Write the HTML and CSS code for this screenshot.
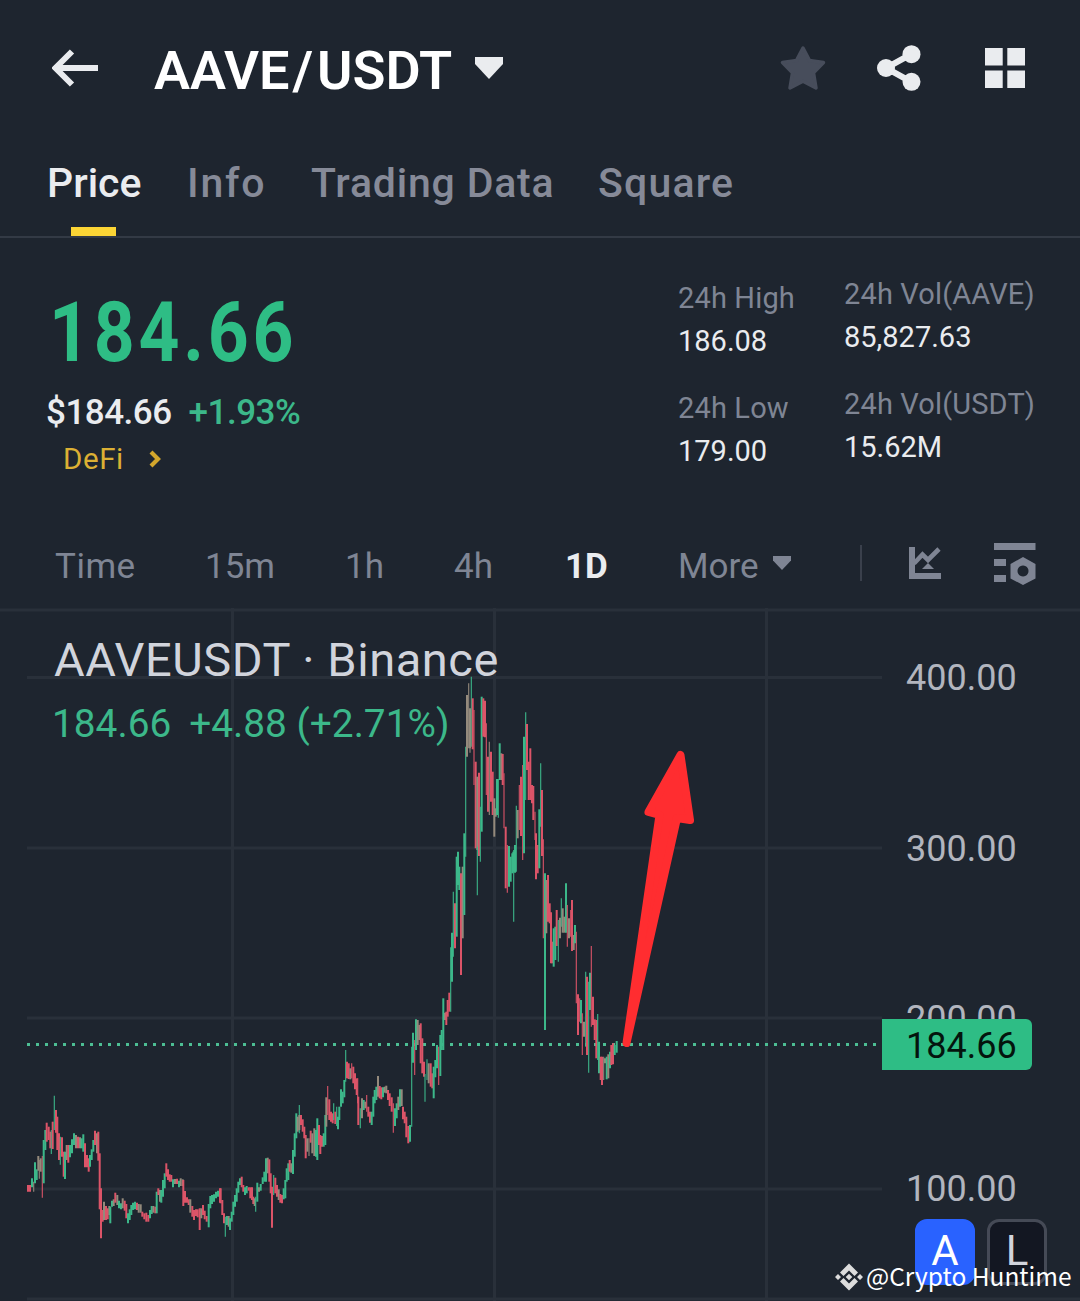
FILE: index.html
```html
<!DOCTYPE html>
<html lang="en">
<head>
  <meta charset="utf-8">
  <title>AAVE/USDT</title>
  <link rel="stylesheet" href="styles.css">
</head>
<body>
  <header class="topbar">
    <svg class="back" width="46" height="38" viewBox="0 0 46 38">
      <path d="M4 19H46M20 2.5L3.5 19L20 35.5" fill="none" stroke="#eaecef" stroke-width="6"/>
    </svg>
    <h1>AAVE<span class="slash">/</span>USDT</h1>
    <svg class="caret" width="28" height="22" viewBox="0 0 28 22">
      <path d="M0 0H28V7L14 22L0 7Z" fill="#eaecef"/>
    </svg>
    <div class="actions">
      <svg width="46" height="46" viewBox="0 0 46 46">
        <path d="M23 3L29.4 15.4L43.5 17.5L33.5 27.8L36 43L23 36.3L10 43L12.5 27.8L2.5 17.5L16.6 15.4Z" fill="#474d5b" stroke="#474d5b" stroke-width="3.5" stroke-linejoin="round"/>
      </svg>
      <svg width="44" height="46" viewBox="0 0 44 46">
        <path d="M34.5 9L9 23L34.5 37" fill="none" stroke="#eaecef" stroke-width="6"/>
        <g fill="#eaecef">
          <circle cx="34.500" cy="9.200" r="9"/>
          <circle cx="9" cy="23" r="9"/>
          <circle cx="34.500" cy="36.800" r="9"/>
        </g>
      </svg>
      <svg width="40" height="40" viewBox="0 0 40 40">
        <path d="M0 0H17.700V17.500H0ZM22.300 0H40V17.500H22.300ZM0 22.500H17.700V40H0ZM22.300 22.500H40V40H22.300Z" fill="#eaecef"/>
      </svg>
    </div>
  </header>

  <nav class="tabs">
    <a class="tab tab-price active">Price</a>
    <a class="tab tab-info">Info</a>
    <a class="tab tab-data">Trading Data</a>
    <a class="tab tab-square">Square</a>
  </nav>

  <section class="quote">
    <div class="quote-main">
      <div class="last-price">184.66</div>
      <div class="sub-price">
        <span class="fiat">$184.66</span>
        <span class="change">+1.93%</span>
      </div>
      <div class="category">
        <span>DeFi</span>
        <svg width="12" height="18" viewBox="0 0 12 18">
          <path d="M2 2L9 9L2 16" fill="none" stroke="#d3a62c" stroke-width="4.200"/>
        </svg>
      </div>
    </div>
    <div class="stats">
      <dl class="stats-range">
        <dt>24h High</dt>
        <dd>186.08</dd>
        <dt>24h Low</dt>
        <dd>179.00</dd>
      </dl>
      <dl class="stats-volume">
        <dt>24h Vol(AAVE)</dt>
        <dd>85,827.63</dd>
        <dt>24h Vol(USDT)</dt>
        <dd>15.62M</dd>
      </dl>
    </div>
  </section>

  <div class="intervals">
    <span class="iv iv-time">Time</span>
    <span class="iv iv-15m">15m</span>
    <span class="iv iv-1h">1h</span>
    <span class="iv iv-4h">4h</span>
    <span class="iv iv-1d active">1D</span>
    <span class="iv iv-more">More
      <svg width="18" height="14" viewBox="0 0 18 14"><path d="M0 0H18V4.500L9 14L0 4.500Z" fill="#7f8594"/></svg>
    </span>
    <i class="split"></i>
    <svg class="icon-chart" width="32" height="32" viewBox="0 0 32 32">
      <path d="M0 0H6V26H32V32H0Z" fill="#7f8594"/>
      <path d="M5 16.500L13.500 7.500L19 13L30 2" fill="none" stroke="#7f8594" stroke-width="4.600"/>
      <path d="M13 22L19 16L25 22Z" fill="#7f8594"/>
    </svg>
    <svg class="icon-settings" width="42" height="42" viewBox="0 0 42 42">
      <path d="M0 0H41.500V7H0ZM0 16H12V23H0ZM0 32H12V39H0Z" fill="#7f8594"/>
      <path fill-rule="evenodd" d="M29 14L41.500 21V35.500L29 42L16.500 35.500V21ZM29 22.500a5.500 5.500 0 1 0 .01 0Z" fill="#7f8594"/>
    </svg>
  </div>

  <main class="chart">
    <svg class="plot" width="1080" height="693" viewBox="0 608 1080 693">
      <g class="grid">
        <path d="M0 610H1080M27 677.500H882M27 848H882M27 1018H882M27 1189H882M27 1299H1080"/>
        <path d="M232.500 608V1301M494.500 608V1301M766.500 608V1301"/>
      </g>
      <path class="price-line" d="M27 1044.500H880"/>
      <g id="candles"></g>
      <!-- hand drawn arrow -->
      <path class="arrow" d="M626.500 1043L659.500 815L648.500 812L680.500 755L690 820L677 818Z"/>
      <g class="axis">
        <text x="906" y="690">400.00</text>
        <text x="906" y="861">300.00</text>
        <text x="906" y="1031">200.00</text>
        <text x="906" y="1201">100.00</text>
      </g>
      <path d="M882 1019H1026a6 6 0 0 1 6 6V1064a6 6 0 0 1 -6 6H882Z" fill="#2ebd85"/>
      <text class="tag" x="906" y="1058">184.66</text>
    </svg>
    <div class="legend">
      <div class="symbol">AAVEUSDT · Binance</div>
      <div class="values"><span>184.66</span><span>+4.88 (+2.71%)</span></div>
    </div>
    <div class="scale-buttons">
      <span class="scale-btn auto">A</span>
      <span class="scale-btn">L</span>
    </div>
    <div class="credit">
      <svg width="28" height="28" viewBox="0 0 28 28" fill="#dcdcdc">
        <path d="M5 9.500L14 0.500L23 9.500L19.500 13L14 7.500L8.500 13ZM5 18.500L14 27.500L23 18.500L19.500 15L14 20.500L8.500 15Z"/>
        <path d="M14 10.700L17.300 14L14 17.300L10.700 14ZM3 11L6 14L3 17L0 14ZM25 11L28 14L25 17L22 14Z"/>
      </svg>
      <span>@Crypto Huntime</span>
    </div>
  </main>

  <script src="chart.js"></script>
</body>
</html>
```
FILE: styles.css
```css
* {
  box-sizing: border-box;
}

body {
  width: 1080px;
  height: 1301px;
  margin: 0;
  overflow: hidden;
  background: #1e252f;
  color: #eaecef;
  font-family: Roboto, "Liberation Sans", sans-serif;
}

svg {
  display: block;
  flex: none;
}

/* Header */
.topbar {
  display: flex;
  align-items: center;
  height: 136px;
  padding: 0 55px 0 52px;
}

h1 {
  width: 320px;
  margin: 5px 0 0 56px;
  color: #fff;
  font-size: 54px;
  font-weight: 600;
  line-height: 64px;
  white-space: nowrap;
}

.slash {
  margin: 0 4px 0 3px;
}

.caret {
  margin-left: 1px;
}

.actions {
  display: flex;
  align-items: center;
  margin-left: auto;
}

.actions svg + svg {
  margin-left: 51px;
}

.actions svg:last-child {
  margin-left: 64px;
}

.tabs {
  display: flex;
  height: 102px;
  padding-left: 47px;
  border-bottom: 2px solid #333a45;
}

.tab {
  position: relative;
  height: 100px;
  padding-top: 22px;
  color: #868a98;
  font-size: 41px;
  font-weight: 500;
  line-height: 50px;
  white-space: nowrap;
}

.tab-price {
  width: 140px;
}

.tab-info {
  width: 124px;
  letter-spacing: 1.8px;
}

.tab-data {
  width: 287px;
  letter-spacing: 0.8px;
}

.tab-square {
  letter-spacing: 1.2px;
}

.tab.active {
  color: #eaecef;
}

.tab.active::after {
  content: "";
  position: absolute;
  left: 24px;
  bottom: 0;
  width: 45px;
  height: 9px;
  background: #fcd535;
}

/* Price summary */
.quote {
  display: flex;
  justify-content: space-between;
  height: 286px;
  padding-left: 46px;
}

.quote-main {
  padding-top: 53px;
}

.last-price {
  margin-left: 3px;
  color: #2ebd85;
  font-size: 83px;
  font-weight: 700;
  letter-spacing: 4.4px;
  line-height: 84px;
  transform: scaleX(0.86);
  transform-origin: left;
}

.sub-price {
  display: flex;
  gap: 17px;
  margin-top: 16px;
  font-size: 35px;
  font-weight: 500;
  letter-spacing: -0.5px;
  line-height: 44px;
}

.change {
  color: #3cb88a;
}

.category {
  display: flex;
  align-items: center;
  gap: 25px;
  margin-top: 4px;
  padding-left: 17px;
  color: #dcb034;
  font-size: 29.5px;
  letter-spacing: 0.6px;
  line-height: 40px;
}

.stats {
  display: flex;
  width: 403px;
  padding-left: 1px;
}

.stats dl {
  margin: 0;
  font-size: 29px;
  line-height: 43px;
  white-space: nowrap;
}

.stats-range {
  width: 166px;
  padding-top: 39px;
}

.stats-volume {
  padding-top: 35px;
}

.stats dt {
  color: #7f8594;
  letter-spacing: 0.15px;
}

.stats dd {
  margin: 0 0 24px;
}

/* Interval picker */
.intervals {
  display: flex;
  align-items: center;
  height: 84px;
  padding-left: 55px;
  color: #7f8594;
  font-size: 35px;
  line-height: 44px;
}

.iv {
  padding-top: 1px;
}

.iv-time {
  width: 150px;
  letter-spacing: 0.5px;
}

.iv-15m { width: 140px; }
.iv-1h { width: 109px; }
.iv-4h { width: 111px; }
.iv-1d { width: 112px; }

.iv.active {
  color: #eaecef;
  font-weight: 700;
}

.iv-more {
  display: flex;
  align-items: center;
  gap: 14px;
  width: 183px;
  padding-left: 1px;
}

.iv-more svg {
  margin-top: -7px;
}

.split {
  width: 2px;
  height: 36px;
  margin-top: -6px;
  background: #3a404c;
}

.icon-chart {
  margin: -6px 53px 0 47px;
}

.icon-settings {
  margin-top: -4px;
}

/* Chart */
.chart {
  position: relative;
  height: 693px;
}

.plot {
  position: absolute;
  top: 0;
  left: 0;
}

.grid path {
  fill: none;
  stroke: #29303a;
  stroke-width: 3;
}

.price-line {
  fill: none;
  stroke: #4dbf94;
  stroke-width: 3;
  stroke-dasharray: 3 6;
}

.candle {
  fill: none;
}

.up { stroke: #3cb88a; }
.down { stroke: #dc5468; }
.mixed { stroke: #948a7c; }

.arrow {
  fill: #ff2d30;
  stroke: #ff2d30;
  stroke-width: 8;
  stroke-linejoin: round;
}

.axis {
  fill: #b2b5be;
  font-size: 36px;
}

.tag {
  fill: #04140d;
  font-size: 36px;
}

.legend {
  position: relative;
  padding: 22px 0 0 54px;
}

.symbol {
  color: #d1d4dc;
  font-size: 47px;
  letter-spacing: 0.55px;
  line-height: 60px;
}

.values {
  display: flex;
  gap: 18px;
  margin: 9px 0 0 -2px;
  color: #3cb88a;
  font-size: 38.8px;
  line-height: 50px;
}

.scale-buttons {
  position: absolute;
  top: 611px;
  left: 915px;
  display: flex;
  gap: 12px;
}

.scale-btn {
  width: 60px;
  height: 66px;
  border: 3px solid #454a56;
  border-radius: 12px;
  background: #131722;
  color: #d1d4dc;
  font-size: 42px;
  line-height: 57px;
  text-align: center;
}

.scale-btn.auto {
  border-color: #2962ff;
  background: #2962ff;
  color: #fff;
}

.credit {
  position: absolute;
  top: 649px;
  left: 835px;
  display: flex;
  align-items: center;
  gap: 3px;
  height: 40px;
  color: #fff;
  font-family: "Noto Sans CJK SC", sans-serif;
  font-size: 24.5px;
  font-weight: 400;
  line-height: 38px;
  white-space: nowrap;
}

.credit span {
  margin-top: -2px;
}
```
FILE: chart.js
```js
// Each run of bars has its own origin, values are in thirds of a pixel.
// g = up, r = down, m = overlapping bars, lower case t after the kind = thin wick
const runs = [
  {
    x: 0, y: 1080,
    bars: `r84,315,335 r90,315,335 g96,295,322 mt101,305,335 g105,247,310 g110,268,300 m115,228,272 mt118,240,296 m122,235,275
      rt127,228,353 g131,180,310 g136,150,210 r140,128,185 r146,140,180 r151,155,205 gt154,150,222 r158,125,207 gt163,47,150
      r168,90,158 r172,110,210 r177,160,240 gt181,170,254 r186,172,230 r191,215,290 g195,215,297 m200,195,240 r205,195,248
      g210,195,232 g216,178,220 g222,160,195 m228,165,205 r234,170,205 m240,172,205 g245,175,205 g250,163,215 r255,190,262
      r261,225,262 r266,235,275 g270,225,260 g275,208,240 g280,180,215 r285,152,195 m291,160,220 r295,155,242 r299,220,388
      r303,325,475 r308,390,425 m312,365,420 r318,378,420 r323,385,418 m328,378,405 g331,380,430 g336,362,380 m341,358,378
      r346,338,368 m352,345,375 g357,362,385 g363,370,388 m368,355,385 r374,362,392 r379,372,415 g384,400,430 g389,388,420
      g394,375,405 g399,368,390 g405,365,388 r411,368,390 m416,372,398 m422,373,398 r427,395,410 r433,400,418 r439,398,425
      r445,405,425 g450,390,415 g455,378,402 m460,378,398 r466,380,400 g470,335,400 r475,325,345 m480,330,365 g484,330,368
      g489,300,350 g494,280,325 r499,250,290 r504,268,300 r509,283,305 r514,285,305 g519,298,322 m525,297,312 r531,296,312
      g537,302,322 m542,295,318 m548,298,318 r550,300,378 r555,333,368 r561,352,368 r566,358,375 m571,358,398 r577,378,410
      r582,390,420 r588,388,408 r593,388,412 r599,385,450 m604,385,415 r609,375,405 r614,392,418 r620,408,425 g626,372,442
      g631,348,385 g636,345,372 g642,343,365 g648,335,355 g654,332,350 r660,325,368`
  },
  {
    x: 220, y: 1000,
    bars: `r2,565,610 r7,600,645 r12,640,670 gt16,650,710 g21,648,675 m26,648,680 g30,655,690 g35,635,665 g40,605,645
      g45,585,620 g50,565,605 g55,545,578 g60,535,555 r65,530,562 r70,555,575 g75,562,585 g80,558,580 r86,562,572
      r91,562,595 r96,562,600 r100,590,612 m104,595,618 gt107,590,635 g112,548,605 m117,562,575 g122,552,572 g128,532,552
      g133,515,545 g138,475,545 m143,473,520 r148,478,545 r152,520,580 r156,560,683 gt161,525,585 r166,533,580 r171,555,590
      m176,568,600 r181,582,608 r186,585,610 g191,565,598 g196,540,595 g200,505,545 g205,490,540 r209,480,515 m214,490,518
      g219,450,522 g224,400,470 g229,340,415 m233,350,395 gt238,315,400 m238,345,390 r243,345,375 r248,358,395 r253,380,415
      r257,405,475 m262,415,455 mt267,415,468 r272,392,428 m277,400,460 m283,385,468 g288,390,470 g292,355,480 r297,375,435
      r301,405,462 r306,408,440 g311,400,440 g316,345,435 m319,292,380 rt323,258,345 r328,298,360 r333,335,365 r338,340,370
      gt341,310,360 r346,335,372 gt350,320,378 g354,350,388 g358,320,360 g363,268,320 g368,275,310 g373,240,292
      gt377,150,245 r381,185,235 r386,190,237 m391,205,238 rt395,190,235 r400,200,250 r405,220,268 r410,235,285 rt413,235,310
      r415,290,375 gt421,325,385 m426,295,355 g431,300,330 m436,305,325 rt440,285,335 r445,320,350 r450,335,368 g455,335,375
      g460,290,350 g464,270,310 g469,260,300 m474,228,290 r479,258,295 r484,262,298 g489,262,292 m494,260,278 m499,257,280
      r504,270,300 r509,280,318 r515,292,335 rt520,310,398 g525,325,378 g530,310,355 m535,290,330 g540,268,320 m545,268,318
      r549,320,358 r554,335,370 r559,350,412 r565,378,430 g570,375,425 gt575,140,380 g579,98,188 rt584,120,225 g588,58,150
      m593,60,135 m598,75,120 r602,70,190 r607,115,220 r612,185,230 gt615,222,305 gt621,178,240 m626,190,250 r632,190,260
      r637,220,265 g641,200,295 g646,180,232 g651,135,205 rt656,140,255 g661,105,228`
  },
  {
    x: 400, y: 660,
    bars: `g125,1110,1170 g130,1015,1170 m135,1058,1080 r139,1055,1095 r143,1020,1070 r148,998,1055 gt152,862,1055 g156,818,965
      gt160,695,890 r165,730,865 g170,590,830 g174,575,675 g178,620,690 r183,640,945 m188,620,835 g193,520,765 gt197,260,590
      m201,105,290 mt206,70,265 m210,145,265 mt210,250,278 gt214,50,260 r218,115,268 rt222,150,375 r227,305,565 m232,350,570
      gt232,560,706 r237,338,588 gt241,440,605 g245,110,515 r250,115,230 r255,122,232 rt259,190,405 r264,290,455
      mt268,245,465 r273,275,425 r278,335,465 m283,415,530 m287,445,470 g291,357,465 gt295,357,473 g299,250,360 m304,280,360
      r308,282,375 rt312,340,505 r317,500,685 rt322,555,698 g327,558,680 g332,590,665 g337,580,640 gt341,570,785
      g340,575,635 g345,555,638 gt349,437,635 m353,450,535 rt358,375,510 r363,350,528 rt368,315,600 g372,230,580
      gt377,157,420 r381,192,330 r386,305,420 r391,265,420 r396,375,430 r400,378,480 rt405,455,540 r408,520,658
      r413,555,640 g418,448,625 gt422,310,500 r426,390,588 rt430,538,835 g435,640,1110 m439,660,820 r444,645,785
      r449,730,790 r453,757,910 r457,845,910 g461,805,920 g466,800,900 r470,750,858 gt475,780,905 m480,773,835
      gt484,715,800 m488,745,818 m493,770,818 g498,670,818 rt502,735,860 m507,775,835 rt512,750,830 r516,720,873
      m521,825,870 g525,795,850 rt529,815,1030 r534,1003,1125 rt539,1015,1085 g543,1020,1090 rt547,1060,1185
      m552,1085,1130 gt557,935,1160 r561,950,1185 gt566,965,1238 g570,938,1050 rt574,858,1100 r579,1010,1095
      r584,1078,1140 r589,1080,1195 gt593,1062,1200 g597,1145,1240 r602,1190,1260 r606,1190,1275 mt611,1190,1260
      m615,1195,1210 g620,1190,1258 m625,1183,1255 g630,1175,1225 r634,1155,1215 r639,1150,1213 g644,1155,1185 g650,1143,1178`
  }
];

const kinds = { g: 'up', r: 'down', m: 'mixed' };
const layer = document.getElementById('candles');

runs.forEach(run => {
  run.bars.split(/\s+/).forEach(bar => {
    const [, kind, thin, x, top, bottom] = bar.match(/^([grm])(t?)(\d+),(\d+),(\d+)$/);
    const line = document.createElementNS('http://www.w3.org/2000/svg', 'path');
    const px = run.x + x / 3;
    line.setAttribute('class', 'candle ' + kinds[kind]);
    line.setAttribute('stroke-width', thin ? 1.1 : 2);
    line.setAttribute('d', `M${px.toFixed(1)} ${(run.y + top / 3).toFixed(1)}V${(run.y + bottom / 3).toFixed(1)}`);
    layer.appendChild(line);
  });
});
```
